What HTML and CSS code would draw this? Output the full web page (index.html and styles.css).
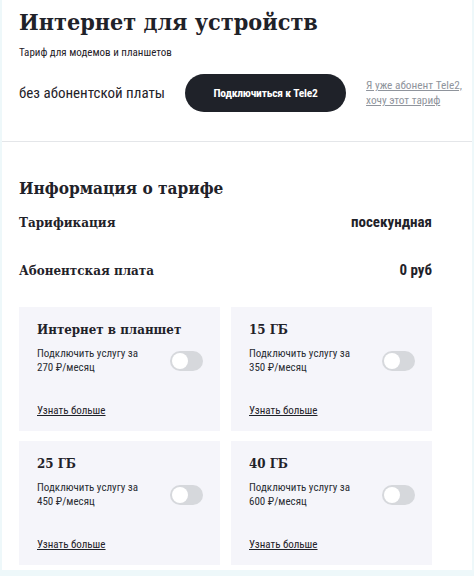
FILE: index.html
```html
<!DOCTYPE html>
<html lang="ru">
<head>
<meta charset="utf-8">
<link rel="stylesheet" href="styles.css">
</head>
<body>
<div class="page">
  <section class="top">
    <h1 class="title">Интернет для устройств</h1>
    <p class="subtitle">Тариф для модемов и планшетов</p>
    <div class="cta-row">
      <span class="fee">без абонентской платы</span>
      <button class="btn">Подключиться к Tele2</button>
      <a class="already" href="#">Я уже абонент Tele2,<br>хочу этот тариф</a>
    </div>
  </section>
  <section class="info">
    <h2 class="info-title">Информация о тарифе</h2>
    <div class="info-row"><span class="label">Тарификация</span><span class="value">посекундная</span></div>
    <div class="info-row second"><span class="label">Абонентская плата</span><span class="value">0 руб</span></div>
    <div class="cards">
      <div class="card">
        <div class="card-title">Интернет в планшет</div>
        <div class="card-mid"><div class="desc">Подключить услугу за<br>270 ₽/месяц</div><span class="toggle"><span class="knob"></span></span></div>
        <a class="more" href="#">Узнать больше</a>
      </div>
      <div class="card">
        <div class="card-title">15 ГБ</div>
        <div class="card-mid"><div class="desc">Подключить услугу за<br>350 ₽/месяц</div><span class="toggle"><span class="knob"></span></span></div>
        <a class="more" href="#">Узнать больше</a>
      </div>
      <div class="card">
        <div class="card-title">25 ГБ</div>
        <div class="card-mid"><div class="desc">Подключить услугу за<br>450 ₽/месяц</div><span class="toggle"><span class="knob"></span></span></div>
        <a class="more" href="#">Узнать больше</a>
      </div>
      <div class="card">
        <div class="card-title">40 ГБ</div>
        <div class="card-mid"><div class="desc">Подключить услугу за<br>600 ₽/месяц</div><span class="toggle"><span class="knob"></span></span></div>
        <a class="more" href="#">Узнать больше</a>
      </div>
    </div>
  </section>
</div>
</body>
</html>
```
FILE: styles.css
```css
html, body {
  margin: 0;
  padding: 0;
  background: #eef8fa;
}
body {
  width: 474px;
  height: 576px;
  overflow: hidden;
  font-family: "Liberation Sans Narrow", "Roboto Condensed", Roboto, sans-serif;
  color: #1f2229;
}
.page {
  margin: 0 2px;
  height: 570px;
  background: #ffffff;
}
.top {
  box-sizing: border-box;
  height: 142px;
  padding: 7px 17px 0;
  border-bottom: 1px solid #e4e6e9;
}
.title {
  margin: 0;
  font-family: "DejaVu Serif Condensed", "DejaVu Serif", serif;
  font-weight: bold;
  font-size: 23.2px;
  line-height: 30px;
}
.subtitle {
  margin: 9px 0 0;
  font-size: 11px;
  line-height: 14px;
}
.cta-row {
  margin-top: 14px;
  display: flex;
  align-items: center;
  height: 38px;
  white-space: nowrap;
}
.fee {
  font-size: 15px;
  line-height: 18px;
  flex: none;
}
.btn {
  flex: none;
  margin-left: 20px;
  width: 161px;
  height: 38px;
  border: none;
  border-radius: 19px;
  background: #1f2229;
  color: #ffffff;
  font-family: "Liberation Sans Narrow", "Roboto Condensed", Roboto, sans-serif;
  font-weight: bold;
  font-size: 11.5px;
  letter-spacing: -0.2px;
}
.already {
  flex: none;
  margin-left: 20px;
  font-size: 11.3px;
  line-height: 15px;
  color: #8f949c;
  text-decoration: underline;
}
.info {
  padding: 34px 40px 0 17px;
}
.info-title {
  margin: 0;
  font-family: "DejaVu Serif Condensed", "DejaVu Serif", serif;
  font-weight: bold;
  font-size: 17.1px;
  line-height: 24px;
}
.info-row {
  margin-top: 12px;
  display: flex;
  justify-content: space-between;
  align-items: center;
  height: 20px;
}
.info-row.second {
  margin-top: 28px;
}
.label {
  font-family: "DejaVu Serif Condensed", "DejaVu Serif", serif;
  font-weight: bold;
  font-size: 13.3px;
}
.value {
  font-weight: bold;
  font-size: 15px;
}
.cards {
  margin-top: 27px;
  display: grid;
  grid-template-columns: 201px 201px;
  grid-auto-rows: 124px;
  column-gap: 11px;
  row-gap: 10px;
}
.card {
  background: #f5f5fa;
  box-sizing: border-box;
  padding: 13px 17px 13px 18px;
  display: flex;
  flex-direction: column;
}
.card-title {
  font-family: "DejaVu Serif Condensed", "DejaVu Serif", serif;
  font-weight: bold;
  font-size: 13.2px;
  line-height: 20px;
}
.card-mid {
  margin-top: 7px;
  display: flex;
  align-items: center;
  justify-content: space-between;
}
.desc {
  font-size: 11px;
  line-height: 14px;
  color: #2a2d33;
}
.toggle {
  width: 33px;
  height: 20px;
  border-radius: 10px;
  background: #d6d8dc;
  position: relative;
  flex: none;
}
.knob {
  position: absolute;
  left: 2px;
  top: 2px;
  width: 16px;
  height: 16px;
  border-radius: 50%;
  background: #ffffff;
}
.more {
  margin-top: auto;
  font-size: 11px;
  line-height: 14px;
  color: #1f2229;
  text-decoration: underline;
}
```
